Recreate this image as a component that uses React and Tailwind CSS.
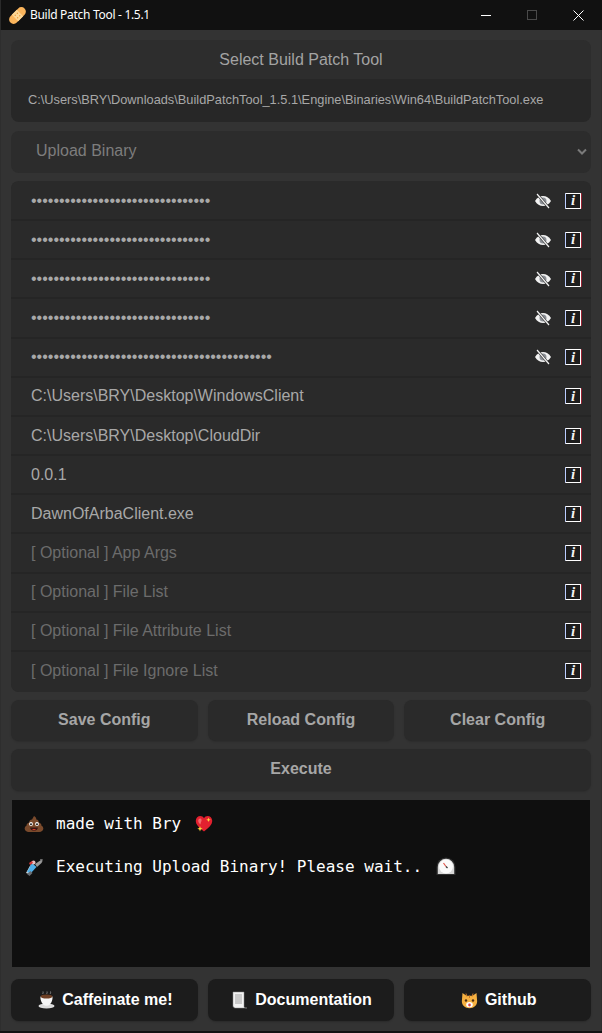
import React from "react";

const Eye = () => (
  <svg width="18" height="16" viewBox="0 0 18 16" className="shrink-0">
    <path d="M1 8c2-3.400 4.800-5 8-5s6 1.600 8 5c-2 3.400-4.800 5-8 5s-6-1.600-8-5z" fill="#f2f2f2" />
    <circle cx="9" cy="8" r="3.500" fill="#8c9096" />
    <path d="M3 1l12 14" stroke="#2a2a2a" strokeWidth="2.600" />
    <path d="M3 1l12 14" stroke="#f2f2f2" strokeWidth="1.200" />
  </svg>
);

const Info = () => (
  <div className="w-[16px] h-[16px] mr-px shrink-0 border border-white border-l-[#b9ccff] rounded-[1px] bg-[#1d1d1d] shadow-[1px_0_0_#9a2233] flex items-center justify-center text-[#f4f4f4] text-[15px] leading-none italic font-bold font-['Liberation_Serif',serif]">
    i
  </div>
);

const Bandage = () => (
  <svg width="17" height="17" viewBox="0 0 17 17" className="shrink-0">
    <g transform="rotate(-45 8.500 8.500)">
      <rect x="-1.500" y="4" width="20" height="9" rx="4.500" fill="#fbb55c" />
      <rect x="5" y="4" width="7" height="9" fill="#fdd796" />
      <circle cx="7" cy="6.800" r=".7" fill="#e89a3d" />
      <circle cx="10" cy="6.800" r=".7" fill="#e89a3d" />
      <circle cx="7" cy="10.200" r=".7" fill="#e89a3d" />
      <circle cx="10" cy="10.200" r=".7" fill="#e89a3d" />
    </g>
  </svg>
);

const Poop = () => (
  <svg width="20" height="18" viewBox="0 0 20 18" className="shrink-0">
    <path d="M10 1c1.500 1 2.500 2 2.300 3.400 1.700.2 2.700 1.500 2.400 3 1.800.2 3 1.700 2.800 3.400 1.300.6 2 1.800 1.800 3.200-.3 1.700-1.900 2.900-3.800 2.900H4.500C2.600 16.900 1 15.700.7 14c-.2-1.400.5-2.600 1.800-3.200-.2-1.700 1-3.200 2.800-3.400-.3-1.600 1-3 2.700-3C8.800 3.200 9.600 2 10 1z" fill="#7a4a2c" />
    <circle cx="7" cy="9" r="1.900" fill="#fff" />
    <circle cx="13" cy="9" r="1.900" fill="#fff" />
    <circle cx="7" cy="9.300" r="1" fill="#222" />
    <circle cx="13" cy="9.300" r="1" fill="#222" />
    <path d="M6 12.500h8c-.5 2.200-2 3.300-4 3.300s-3.500-1.100-4-3.300z" fill="#3a1410" />
    <path d="M8 14.500c1-.8 3-.8 4 0-1 1-3 1-4 0z" fill="#e8412f" />
  </svg>
);

const Heart = () => (
  <svg width="18" height="17" viewBox="0 0 18 17" className="shrink-0">
    <path d="M9 16.500C5 13 .5 10 .8 5.500.9 2.800 3 1 5.300 1 6.900 1 8.200 1.900 9 3.200 9.800 1.900 11.100 1 12.700 1 15 1 17.100 2.800 17.200 5.500 17.500 10 13 13 9 16.500z" fill="#e3202f" />
    <path d="M3.500 4.500c1-1.300 2.800-1.200 3 0 .5 1.500-1 3-1 5-1.500-1-3-3.400-2-5z" fill="#f26a6f" />
    <path d="M13.500 2.500l.6 1.700 1.700.6-1.700.6-.6 1.700-.6-1.700-1.700-.6 1.700-.6z" fill="#ffd83d" />
    <path d="M5 11l.7 2 2 .7-2 .7-.7 2-.7-2-2-.7 2-.7z" fill="#ffd83d" />
  </svg>
);

const Dash = () => (
  <svg width="20" height="20" viewBox="0 0 20 20" className="shrink-0">
    <path d="M7 7l-5 9 3 1z" fill="#d8dde0" />
    <path d="M8 6l4.500 4-6 6.500-3.500-1.500z" fill="#4fb0ea" />
    <path d="M11 7l6-4 1.500 1-1 2-4.500 4z" fill="#9a9a9a" />
    <path d="M16 2l3 .5-1.500 2.500z" fill="#8a8a8a" />
    <path d="M3 17l3.500-3 2 2-3 3z" fill="#6a6f75" />
    <circle cx="9.500" cy="5.500" r="2" fill="#e9c0c0" />
    <path d="M5 6l3-2 1 2-3 2z" fill="#d63a3a" />
  </svg>
);

const Clock = () => (
  <svg width="20" height="19" viewBox="0 0 20 19" className="shrink-0">
    <path d="M.5 18V10a9.500 9.500 0 0 1 19 0v8z" fill="#2e2e2e" />
    <path d="M1.800 17V10a8.200 8.200 0 0 1 16.400 0v7z" fill="#d8d8d8" />
    <circle cx="10" cy="9.500" r="7" fill="#fafafa" />
    <path d="M10 9.500L7.500 6" stroke="#e0554a" strokeWidth="1.200" />
    <path d="M10 9.500l1.500 1.500" stroke="#333" strokeWidth="1.200" />
  </svg>
);

const Coffee = () => (
  <svg width="17" height="18" viewBox="0 0 17 18" className="shrink-0">
    <path d="M5 3c-.6-1 .6-1.300 0-2.500M9 3c-.6-1 .6-1.300 0-2.500M12.500 3c-.6-1 .6-1.300 0-2.500" stroke="#999" strokeWidth=".8" fill="none" />
    <ellipse cx="8.500" cy="15" rx="8" ry="2.500" fill="#dcdcdc" />
    <path d="M2.500 5.500h12c.4 3.800-1.600 9.300-6 9.300s-6.400-5.500-6-9.300z" fill="#f6f6f6" />
    <ellipse cx="8.500" cy="5.500" rx="6" ry="2" fill="#6e3f24" />
  </svg>
);

const Doc = () => (
  <svg width="16" height="18" viewBox="0 0 16 18" className="shrink-0">
    <path d="M1 1h11v14.500c0 1 .8 1.500 3 1.500H3.500C2 17 1 16 1 14.800z" fill="#f2f2f2" stroke="#888" strokeWidth=".5" />
    <path d="M3 4h7M3 6h7M3 8h7M3 10h7M3 12h7" stroke="#9a9a9a" strokeWidth=".9" />
  </svg>
);

const Cat = () => (
  <svg width="17" height="17" viewBox="0 0 17 17" className="shrink-0">
    <path d="M1.500 1l4 2.800h6l4-2.800.6 7.500c.6 4.500-3.200 7.700-7.600 7.700S.300 13 .9 8.500z" fill="#f5b041" />
    <path d="M5 1.500l.8 3M8.500 3.500v2.500M12 1.500l-.8 3" stroke="#c9772a" strokeWidth="1" />
    <circle cx="5" cy="8.500" r="1.200" fill="#4a2c14" />
    <circle cx="12" cy="8.500" r="1.200" fill="#4a2c14" />
    <ellipse cx="8.500" cy="12.700" rx="3.300" ry="2.600" fill="#fff" />
    <ellipse cx="8.500" cy="13" rx="1.300" ry="1.400" fill="#d8434a" />
  </svg>
);

const d32 = "••••••••••••••••••••••••••••••••";
const d43 = "•••••••••••••••••••••••••••••••••••••••••••";

const rows = [
  { t: d32, eye: 1, pw: 1 },
  { t: d32, eye: 1, pw: 1 },
  { t: d32, eye: 1, pw: 1 },
  { t: d32, eye: 1, pw: 1 },
  { t: d43, eye: 1, pw: 1 },
  { t: "C:\\Users\\BRY\\Desktop\\WindowsClient" },
  { t: "C:\\Users\\BRY\\Desktop\\CloudDir" },
  { t: "0.0.1" },
  { t: "DawnOfArbaClient.exe" },
  { t: "[ Optional ] App Args", ph: 1 },
  { t: "[ Optional ] File List", ph: 1 },
  { t: "[ Optional ] File Attribute List", ph: 1 },
  { t: "[ Optional ] File Ignore List", ph: 1 },
];

const Btn = ({ children, className = "" }) => (
  <div className={`bg-[#2a2a2a] rounded-[8px] shadow-[0_1px_2px_rgba(0,0,0,0.15)] flex items-center justify-center pb-[2px] text-[#a6a6a6] font-bold text-[16px] ${className}`}>
    {children}
  </div>
);

const DarkBtn = ({ icon, label }) => (
  <div className="flex-1 h-[42px] bg-[#1c1c1c] rounded-[8px] shadow-[0_1px_2px_rgba(0,0,0,0.2)] flex items-center justify-center gap-[7px] pl-[2px] text-white font-bold text-[16px]">
    {icon}
    <span>{label}</span>
  </div>
);

export default function App() {
  return (
    <div className="w-[602px] h-[1033px] bg-[#111111] font-['Liberation_Sans',Arial,sans-serif] flex flex-col overflow-hidden">
      <div className="h-[30px] shrink-0 bg-[#111111] flex items-center pl-[8px] border-l border-[#2a2a2a]">
        <Bandage />
        <span className="ml-[4px] text-white text-[12px] tracking-[-0.3px] font-['Noto_Sans',sans-serif]">Build Patch Tool - 1.5.1</span>
        <div className="ml-auto flex items-center">
          <div className="w-[10px] h-px bg-white mr-[36px]" />
          <div className="w-[10px] h-[10px] border border-[#4a4a4a] mr-[36px]" />
          <svg width="11" height="11" viewBox="0 0 11 11" className="mr-[18px]">
            <path d="M.5.5l10 10M10.500.5l-10 10" stroke="#fff" strokeWidth="1" />
          </svg>
        </div>
      </div>

      <div className="h-[1001px] shrink-0 bg-[#333333] border-l border-r border-[#2e2e2e] px-[10px] pt-[10px] flex flex-col">
        <div className="h-[82px] rounded-[8px] overflow-hidden flex flex-col shrink-0">
          <div className="h-[39px] bg-[#2d2d2d] flex items-center justify-center text-[#a3a3a3] text-[16px]">Select Build Patch Tool</div>
          <div className="h-[43px] bg-[#272727] flex items-center pl-[17px] pb-[2px] text-[#a8a8a8] text-[12.800px]">
            C:\Users\BRY\Downloads\BuildPatchTool_1.5.1\Engine\Binaries\Win64\BuildPatchTool.exe
          </div>
        </div>

        <div className="mt-[9px] h-[42px] shrink-0 rounded-[8px] bg-[#2c2c2c] flex items-center pl-[25px] pr-[4px] pb-[2px] text-[#7d7d7d] text-[16px]">
          <span>Upload Binary</span>
          <svg width="10" height="7" viewBox="0 0 10 7" className="ml-auto">
            <path d="M1 1.500l4 4 4-4" stroke="#7a7a7a" strokeWidth="2" fill="none" />
          </svg>
        </div>

        <div className="mt-[8px] h-[511px] pt-[1px] shrink-0 rounded-[8px] overflow-hidden flex flex-col bg-[#2a2a2a]">
          {rows.map((r, i) => (
            <div key={i} className={`bg-[#2a2a2a] flex items-center pl-[20px] pr-[9px] ${i < 12 ? "h-[39.170px] shrink-0 border-b-2 border-[#252525]" : "flex-1 pb-[2px]"}`}>
              <span className={r.ph ? "text-[#6c6c6c] text-[16px]" : "text-[#a8a8a8] text-[16px]"}>{r.t}</span>
              <div className="ml-auto flex items-center gap-[13px]">
                {r.eye ? <Eye /> : null}
                <Info />
              </div>
            </div>
          ))}
        </div>

        <div className="mt-[8px] flex gap-[10px] shrink-0">
          <Btn className="flex-1 h-[41px]">Save Config</Btn>
          <Btn className="flex-1 h-[41px]">Reload Config</Btn>
          <Btn className="flex-1 h-[41px]">Clear Config</Btn>
        </div>
        <Btn className="mt-[8px] h-[42px] shrink-0">Execute</Btn>

        <div className="mt-[9px] mx-px h-[167px] shrink-0 bg-[#0f0f0f] px-[12px] pt-[13px] text-white text-[16px] font-['DejaVu_Sans_Mono','Liberation_Mono',monospace] flex flex-col gap-[22px]">
          <div className="flex items-center h-[21px]"><Poop /><span className="ml-[12px] mr-[14px]">made with Bry</span><Heart /></div>
          <div className="flex items-center h-[21px]"><Dash /><span className="ml-[12px] mr-[14px]">Executing Upload Binary! Please wait..</span><Clock /></div>
        </div>

        <div className="mt-[12px] flex gap-[10px] shrink-0">
          <DarkBtn icon={<Coffee />} label="Caffeinate me!" />
          <DarkBtn icon={<Doc />} label="Documentation" />
          <DarkBtn icon={<Cat />} label="Github" />
        </div>
      </div>
    </div>
  );
}
